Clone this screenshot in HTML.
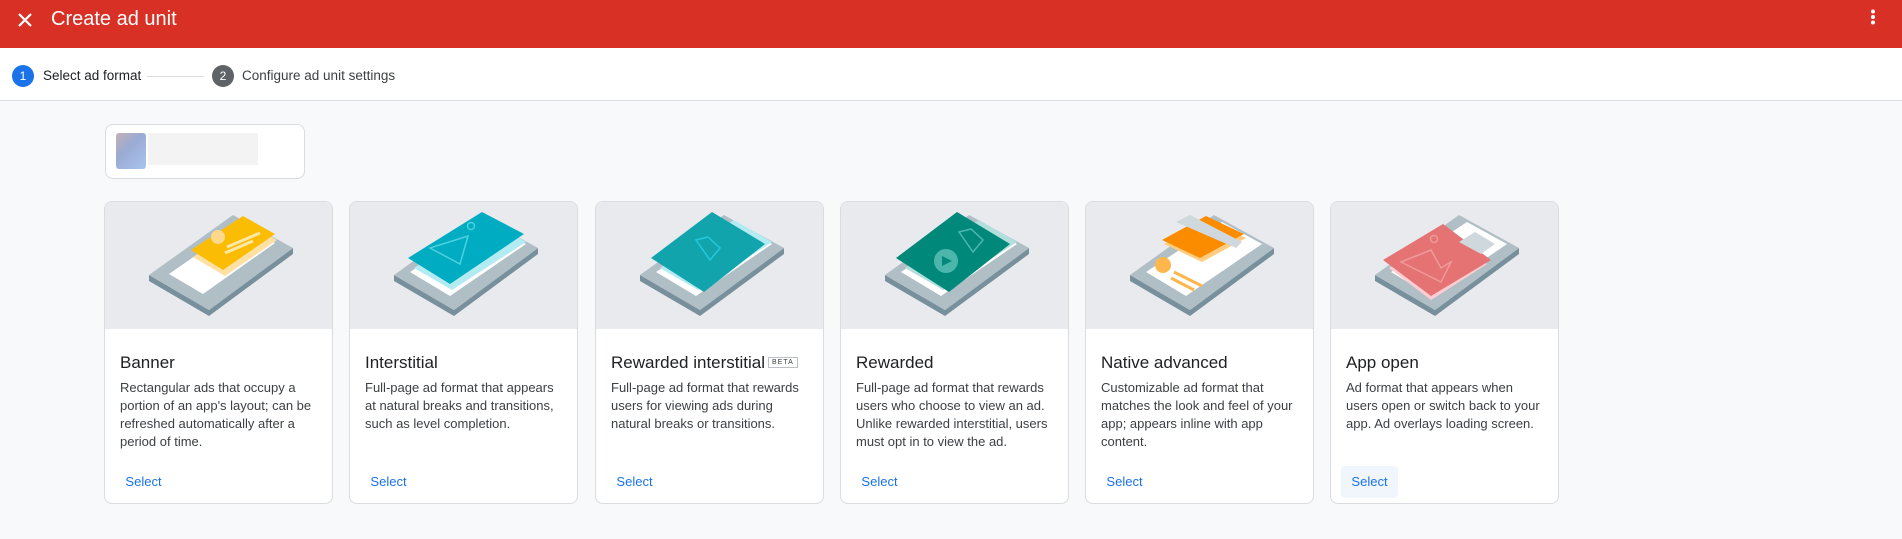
<!DOCTYPE html>
<html><head><meta charset="utf-8"><style>
*{box-sizing:border-box;margin:0;padding:0}
body{width:1902px;height:539px;overflow:hidden;background:#f8f9fa;font-family:"Liberation Sans",Arial,sans-serif;position:relative}
.hdr{position:absolute;left:0;top:0;width:1902px;height:48px;background:#d93025;color:#fff}
.hdr .t{position:absolute;left:51px;top:7px;font-size:20px;line-height:24px}
.steps{position:absolute;left:0;top:48px;width:1902px;height:53px;background:#fff;border-bottom:1px solid #dadce0}
.c{position:absolute;top:17px;width:22px;height:22px;border-radius:50%;color:#fff;font-size:12px;text-align:center;line-height:22px}
.st{position:absolute;top:20px;font-size:13.5px;color:#202124}
.box{position:absolute;left:105px;top:124px;width:200px;height:55px;background:#fff;border:1px solid #dadce0;border-radius:8px}
.card{position:absolute;top:201px;width:229px;height:303px;background:#fff;border:1px solid #dadce0;border-radius:8px;overflow:hidden}
.img{height:127px;background:#e8eaed}
.img svg{display:block}
.ti{position:absolute;left:15px;top:151px;font-size:17px;color:#202124}
.de{position:absolute;left:15px;top:177px;right:12px;font-size:13px;line-height:18px;color:#3c4043}
.se{position:absolute;left:10px;top:264px;width:57px;height:32px;line-height:32px;text-align:center;font-size:13px;color:#1a73e8;border-radius:4px}
.beta{display:inline-block;font-size:7px;letter-spacing:1px;border:1px solid #bdc1c6;padding:1px 3px;vertical-align:4px;margin-left:3px;color:#3c4043}
</style></head><body>
<div class="hdr">
<svg style="position:absolute;left:17px;top:12px" width="16" height="16" viewBox="0 0 16 16"><path d="M2 2L14 14M14 2L2 14" stroke="#fff" stroke-width="2.2"/></svg>
<div class="t">Create ad unit</div>
<svg style="position:absolute;left:1869px;top:9px" width="8" height="16"><circle cx="4" cy="2.5" r="2" fill="#fff"/><circle cx="4" cy="8" r="2" fill="#fff"/><circle cx="4" cy="13.5" r="2" fill="#fff"/></svg>
</div>
<div class="steps">
<div class="c" style="left:12px;background:#1a73e8">1</div>
<div class="st" style="left:43px">Select ad format</div>
<div style="position:absolute;left:147px;top:28px;width:57px;height:1px;background:#dadce0"></div>
<div class="c" style="left:212px;background:#5f6368">2</div>
<div class="st" style="left:242px;color:#3c4043">Configure ad unit settings</div>
</div>
<div class="box">
<div style="position:absolute;left:10px;top:8px;width:30px;height:36px;background:linear-gradient(135deg,#c4b0b5,#9aabd3 40%,#a9c4f0);border-radius:3px"></div>
<div style="position:absolute;left:42px;top:8px;width:110px;height:32px;background:#eeeeee;opacity:.7"></div>
</div>

<div class="card" style="left:104px"><div class="img"><svg width="229" height="127">
<polygon points="44,79 104,114 188,52 188,46 104,108 44,73" fill="#78909c"/>
<polygon points="44,73 128,13 188,46 104,108" fill="#b0bec5"/>
<polygon points="64,72 136,22 170,41 98,92" fill="#fff"/>
<polygon points="88,55 140,20 172,38 120,74" fill="#ffe0a3"/>
<polygon points="86,48 138,14 170,32 118,68" fill="#fbbc04"/>
<circle cx="113" cy="35" r="7" fill="#ffd98a"/>
<path d="M122 45L155 31M120 51L148 39" stroke="#ffe7a8" stroke-width="3"/>
</svg></div><div class="ti">Banner</div><div class="de">Rectangular ads that occupy a portion of an app's layout; can be refreshed automatically after a period of time.</div><div class="se">Select</div></div>

<div class="card" style="left:349px"><div class="img"><svg width="229" height="127">
<polygon points="44,79 104,114 188,52 188,46 104,108 44,73" fill="#78909c"/>
<polygon points="44,73 128,13 188,46 104,108" fill="#b0bec5"/>
<polygon points="60,70 136,20 176,42 100,94" fill="#fff"/>
<polygon points="64,66 138,18 176,40 102,88" fill="#b2ebf2"/>
<polygon points="58,56 132,10 174,32 100,82" fill="#00acc1"/>
<path d="M80 46L118 34L110 62Z" fill="none" stroke="#4dd0e1" stroke-width="1.5"/>
<circle cx="121" cy="24" r="3.5" fill="none" stroke="#4dd0e1" stroke-width="1.5"/>
</svg></div><div class="ti">Interstitial</div><div class="de">Full-page ad format that appears at natural breaks and transitions, such as level completion.</div><div class="se">Select</div></div>

<div class="card" style="left:595px"><div class="img"><svg width="229" height="127">
<polygon points="44,79 104,114 188,52 188,46 104,108 44,73" fill="#78909c"/>
<polygon points="44,73 128,13 188,46 104,108" fill="#b0bec5"/>
<polygon points="60,70 136,20 176,42 100,94" fill="#fff"/>
<polygon points="64,66 138,18 176,40 102,88" fill="#b2ebf2"/>
<polygon points="55,56 116,10 169,42 108,90" fill="#12a4ad"/>
<path d="M100 38L112 35L124 46L114 58Z" fill="none" stroke="#26c6da" stroke-width="1.5"/>
</svg></div><div class="ti">Rewarded interstitial<span class="beta">BETA</span></div><div class="de">Full-page ad format that rewards users for viewing ads during natural breaks or transitions.</div><div class="se">Select</div></div>

<div class="card" style="left:840px"><div class="img"><svg width="229" height="127">
<polygon points="44,79 104,114 188,52 188,46 104,108 44,73" fill="#78909c"/>
<polygon points="44,73 128,13 188,46 104,108" fill="#b0bec5"/>
<polygon points="60,70 136,20 176,42 100,94" fill="#fff"/>
<polygon points="64,66 138,18 176,40 102,88" fill="#b2dfdb"/>
<polygon points="55,56 116,10 169,42 108,90" fill="#00897b"/>
<path d="M118 30L130 27L142 38L132 50Z" fill="none" stroke="#4db6ac" stroke-width="1.5"/>
<circle cx="105" cy="59" r="12" fill="#4db6ac"/>
<path d="M101 54L111 59L101 64Z" fill="#00897b"/>
</svg></div><div class="ti">Rewarded</div><div class="de">Full-page ad format that rewards users who choose to view an ad. Unlike rewarded interstitial, users must opt in to view the ad.</div><div class="se">Select</div></div>

<div class="card" style="left:1085px"><div class="img"><svg width="229" height="127">
<polygon points="44,79 104,114 188,52 188,46 104,108 44,73" fill="#78909c"/>
<polygon points="44,73 128,13 188,46 104,108" fill="#b0bec5"/>
<polygon points="60,70 136,20 176,42 100,94" fill="#fff"/>
<polygon points="78,42 122,18 160,36 116,60" fill="#ffcc80"/>
<polygon points="76,38 120,14 158,32 114,56" fill="#fb8c00"/>
<polygon points="90,20 104,13 156,40 150,46" fill="#cfd8dc"/>
<circle cx="77" cy="63" r="8" fill="#ffb74d"/>
<path d="M88 70L116 84M85 76L108 88" stroke="#ffb74d" stroke-width="3"/>
</svg></div><div class="ti">Native advanced</div><div class="de">Customizable ad format that matches the look and feel of your app; appears inline with app content.</div><div class="se">Select</div></div>

<div class="card" style="left:1330px"><div class="img"><svg width="229" height="127">
<polygon points="44,79 104,114 188,52 188,46 104,108 44,73" fill="#78909c"/>
<polygon points="44,73 128,13 188,46 104,108" fill="#b0bec5"/>
<polygon points="60,70 136,20 176,42 100,94" fill="#fff"/>
<polygon points="58,66 116,32 156,62 100,98" fill="#ffcdd2"/>
<polygon points="52,58 112,22 160,58 100,94" fill="#e57373"/>
<polygon points="128,40 144,30 164,42 150,52" fill="#cfd8dc"/>
<path d="M70 60L100 48L110 66L120 60L110 80Z" fill="none" stroke="#ef9a9a" stroke-width="1.5"/>
<circle cx="103" cy="37" r="3.5" fill="none" stroke="#ef9a9a" stroke-width="1.5"/>
</svg></div><div class="ti">App open</div><div class="de">Ad format that appears when users open or switch back to your app. Ad overlays loading screen.</div><div class="se" style="background:#f1f5fc">Select</div></div>
</body></html>
